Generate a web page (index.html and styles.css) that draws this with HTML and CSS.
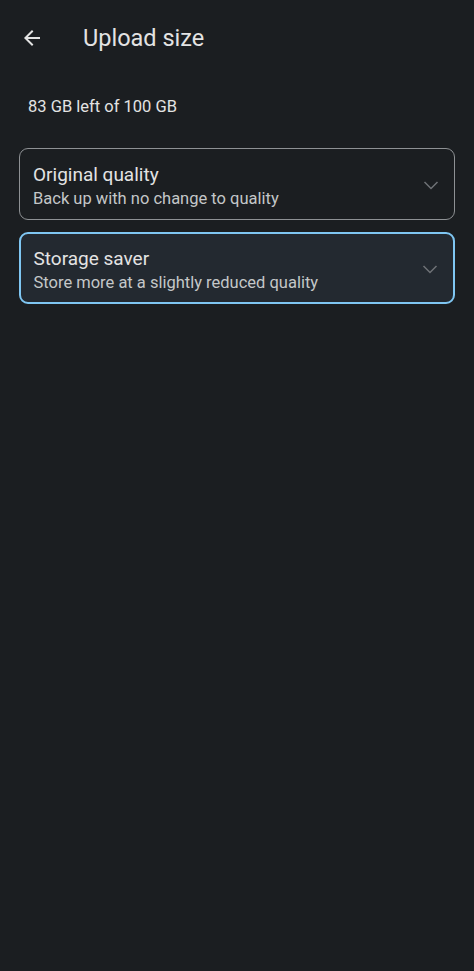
FILE: index.html
```html
<!DOCTYPE html>
<html>
<head>
<meta charset="utf-8">
<link rel="stylesheet" href="styles.css">
</head>
<body>
<div class="app">
  <header class="topbar">
    <button class="back" aria-label="Back">
      <svg width="24" height="24" viewBox="0 0 24 24"><path d="M20 11H7.83l5.59-5.59L12 4l-8 8 8 8 1.41-1.41L7.83 13H20v-2z" fill="#e3e3e3"/></svg>
    </button>
    <h1 class="title">Upload size</h1>
  </header>
  <p class="quota">83 GB left of 100 GB</p>
  <div class="options">
    <div class="option">
      <div class="texts">
        <div class="opt-title">Original quality</div>
        <div class="opt-sub">Back up with no change to quality</div>
      </div>
      <svg class="chev" width="16" height="16" viewBox="0 0 16 16"><path d="M1.5 5L8 11.5 14.5 5" fill="none" stroke="#6f7276" stroke-width="1.5"/></svg>
    </div>
    <div class="option selected">
      <div class="texts">
        <div class="opt-title">Storage saver</div>
        <div class="opt-sub">Store more at a slightly reduced quality</div>
      </div>
      <svg class="chev" width="16" height="16" viewBox="0 0 16 16"><path d="M1.5 5L8 11.5 14.5 5" fill="none" stroke="#6f7276" stroke-width="1.5"/></svg>
    </div>
  </div>
</div>
</body>
</html>
```
FILE: styles.css
```css
html, body {
  margin: 0;
  padding: 0;
  background: #1b1e21;
  font-family: Roboto, "Noto Sans", "Liberation Sans", sans-serif;
  color: #e3e3e3;
}
.app {
  width: 474px;
  min-height: 971px;
}
.topbar {
  height: 75px;
  display: flex;
  align-items: center;
}
.back {
  background: none;
  border: none;
  padding: 0;
  margin-left: 20px;
  width: 24px;
  height: 24px;
  display: flex;
  align-items: center;
  justify-content: center;
}
.title {
  margin: 0 0 0 39px;
  font-size: 23.5px;
  font-weight: 400;
  color: #e3e3e3;
}
.quota {
  margin: 21px 0 0 28px;
  font-size: 16.5px;
  line-height: 22px;
  color: #e3e3e3;
}
.options {
  margin: 30px 19px 0 19px;
  display: flex;
  flex-direction: column;
  gap: 12px;
}
.option {
  height: 72px;
  box-sizing: border-box;
  border: 1.5px solid #8e9194;
  border-radius: 9px;
  display: flex;
  align-items: center;
  padding: 0 15px 0 13px;
}
.option.selected {
  border: 2px solid #7fc6f2;
  background: #232930;
  padding-left: 12.5px;
}
.texts {
  flex: 1;
  display: flex;
  flex-direction: column;
  padding-top: 4px;
}
.opt-title {
  font-size: 19px;
  line-height: 25px;
  color: #e3e3e3;
}
.opt-sub {
  font-size: 16.5px;
  line-height: 23px;
  color: #c4c7c8;
}
.chev {
  margin-top: 1px;
}
```
